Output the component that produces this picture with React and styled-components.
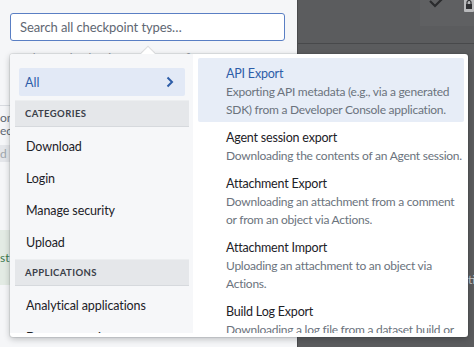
import React from "react";
import styled, { createGlobalStyle } from "styled-components";

const GlobalStyle = createGlobalStyle`
  html, body {
    margin: 0;
    padding: 0;
    background: #5b5c5e;
  }
  * {
    box-sizing: border-box;
  }
`;

const categories = ["Download", "Login", "Manage security", "Upload"];
const applications = ["Analytical applications", "Data connection"];

const types = [
  {
    title: "API Export",
    desc: "Exporting API metadata (e.g., via a generated SDK) from a Developer Console application.",
    active: true,
  },
  {
    title: "Agent session export",
    desc: "Downloading the contents of an Agent session.",
  },
  {
    title: "Attachment Export",
    desc: "Downloading an attachment from a comment or from an object via Actions.",
  },
  {
    title: "Attachment Import",
    desc: "Uploading an attachment to an object via Actions.",
  },
  {
    title: "Build Log Export",
    desc: "Downloading a log file from a dataset build or job.",
  },
];

const App = () => {
  return (
    <Page>
      <GlobalStyle />
      <LeftPane>
        <SearchRow>
          <SearchInput placeholder="Search all checkpoint types…" />
        </SearchRow>
        <Hint>Select a checkpoint type to configure</Hint>
        <Divider />
        <EdgeText $top="5px">on</EdgeText>
        <EdgeText>ec</EdgeText>
        <GrayBox>d</GrayBox>
        <GreenBox>st</GreenBox>
      </LeftPane>
      <DarkPane>
        <TopTools>
          <svg width="18" height="14" viewBox="0 0 18 14">
            <path d="M2 4 L7 9 L16 0" fill="none" stroke="#2a2b2d" strokeWidth="2.2" />
          </svg>
          <LockBox>
            <svg width="8" height="10" viewBox="0 0 8 10">
              <path d="M2 4 V2.5 a2 2 0 0 1 4 0 V4" fill="none" stroke="#2f3033" strokeWidth="1.2" />
              <rect x="1" y="4" width="6" height="5" fill="#2f3033" />
            </svg>
          </LockBox>
        </TopTools>
        <DarkRule />
        <DarkText>ti</DarkText>
      </DarkPane>

      <Popover>
        <Caret />
        <Sidebar>
          <AllRow>
            <span>All</span>
            <svg width="8" height="12" viewBox="0 0 8 12">
              <path d="M1.5 1.5 L6 6 L1.5 10.5" fill="none" stroke="#2d5da8" strokeWidth="2" />
            </svg>
          </AllRow>
          <SectionHeader $first>Categories</SectionHeader>
          {categories.map((c) => (
            <NavItem key={c}>{c}</NavItem>
          ))}
          <SectionHeader>Applications</SectionHeader>
          {applications.map((c) => (
            <NavItem key={c}>{c}</NavItem>
          ))}
        </Sidebar>
        <TypeList>
          {types.map((t) => (
            <TypeItem key={t.title} $active={t.active}>
              <TypeTitle $active={t.active}>{t.title}</TypeTitle>
              <TypeDesc>{t.desc}</TypeDesc>
            </TypeItem>
          ))}
        </TypeList>
      </Popover>
    </Page>
  );
};

const Page = styled.div`
  position: relative;
  width: 474px;
  height: 347px;
  overflow: hidden;
  display: grid;
  grid-template-columns: 298px 1fr;
  font-family: "Lato", "Liberation Sans", sans-serif;
`;

const LeftPane = styled.div`
  background: #f5f6f8;
  display: flex;
  flex-direction: column;
  overflow: hidden;
  border-right: 1px solid #4a4b4d;
`;

const SearchRow = styled.div`
  padding: 13px 0 0 10px;
`;

const SearchInput = styled.input`
  width: 275px;
  height: 28px;
  border: 1.5px solid #5a7fc4;
  border-radius: 3px;
  background: #fff;
  padding: 0 9px;
  font-family: "Lato", "Liberation Sans", sans-serif;
  font-size: 13px;
  letter-spacing: -0.1px;
  outline: none;
  &::placeholder {
    color: #5f6873;
  }
`;

const Hint = styled.div`
  margin: 9px 0 0 20px;
  font-size: 12px;
  color: #9aa0a8;
  white-space: nowrap;
`;

const Divider = styled.div`
  margin-top: 40px;
  height: 1px;
  background: #d8dbe0;
`;

const EdgeText = styled.div`
  margin-top: ${(p) => p.$top || "0"};
  font-size: 12px;
  line-height: 13px;
  color: #5f6873;
`;

const GrayBox = styled.div`
  margin-top: 8px;
  width: 10px;
  height: 17px;
  background: #e4e6ea;
  color: #a0a6ad;
  font-size: 12px;
  line-height: 17px;
`;

const GreenBox = styled.div`
  margin-top: 68px;
  width: 10px;
  height: 55px;
  background: #e3ebe4;
  color: #3c7a4e;
  font-size: 12px;
  display: flex;
  align-items: center;
`;

const DarkPane = styled.div`
  background: #5b5c5e;
  display: flex;
  flex-direction: column;
`;

const TopTools = styled.div`
  margin-left: auto;
  width: 54px;
  height: 29px;
  background: #5f6062;
  display: flex;
  align-items: flex-start;
  justify-content: space-between;
  padding-left: 8px;
  margin-top: -3px;
`;

const LockBox = styled.div`
  width: 10px;
  height: 15px;
  background: #b9babc;
  display: flex;
  align-items: center;
  justify-content: center;
  border-radius: 1px;
`;

const DarkRule = styled.div`
  margin-top: 17px;
  height: 1px;
  background: #48494b;
`;

const DarkText = styled.div`
  margin: 228px 0 0 auto;
  width: 6px;
  overflow: hidden;
  font-size: 12px;
  color: #c9cacc;
`;

const Popover = styled.div`
  position: absolute;
  left: 10px;
  top: 54px;
  width: 458px;
  height: 283px;
  padding-bottom: 4px;
  background: #fff;
  border-radius: 3px;
  box-shadow: 0 0 0 1px rgba(17, 20, 24, 0.08), 0 2px 6px rgba(17, 20, 24, 0.25);
  display: grid;
  grid-template-columns: 183px 1fr;
`;

const Caret = styled.div`
  position: absolute;
  left: 133px;
  top: -5px;
  width: 10px;
  height: 10px;
  background: #fff;
  transform: rotate(45deg);
  box-shadow: -1px -1px 0 rgba(17, 20, 24, 0.1);
`;

const Sidebar = styled.div`
  position: relative;
  background: #f6f7f9;
  padding: 14px 4px 0 5px;
  overflow: hidden;
  border-radius: 3px 0 0 0;
`;

const AllRow = styled.div`
  margin: 0 4px;
  height: 28px;
  background: #e2e9f6;
  border-radius: 2px;
  display: flex;
  align-items: center;
  justify-content: space-between;
  padding: 0 11px 0 6px;
  font-size: 12.5px;
  color: #2d5da8;
`;

const SectionHeader = styled.div`
  margin-top: ${(p) => (p.$first ? "4px" : "1px")};
  margin-bottom: 3px;
  height: 27px;
  background: #e5e7ea;
  border-top: 1px solid #eceef0;
  border-bottom: 1px solid #d6d9dd;
  display: flex;
  align-items: center;
  padding-left: 10px;
  font-size: 9.5px;
  font-weight: 700;
  letter-spacing: 0.4px;
  text-transform: uppercase;
  color: #3a4049;
`;

const NavItem = styled.div`
  height: 32px;
  display: flex;
  align-items: center;
  padding-left: 11px;
  font-size: 12.5px;
  letter-spacing: -0.1px;
  color: #1c2127;
  white-space: nowrap;
`;

const TypeList = styled.div`
  padding: 4px 4px 0 5px;
  overflow: hidden;
  display: flex;
  flex-direction: column;
`;

const TypeItem = styled.div`
  padding: 6px 2px 3px 28px;
  background: ${(p) => (p.$active ? "#e7edf7" : "transparent")};
  border-radius: 2px;
`;

const TypeTitle = styled.div`
  font-size: 12.5px;
  letter-spacing: -0.2px;
  line-height: 19px;
  color: ${(p) => (p.$active ? "#2d5da8" : "#1c2127")};
`;

const TypeDesc = styled.div`
  font-size: 12px;
  letter-spacing: -0.25px;
  line-height: 18px;
  color: #6b737d;
`;

export default App;
